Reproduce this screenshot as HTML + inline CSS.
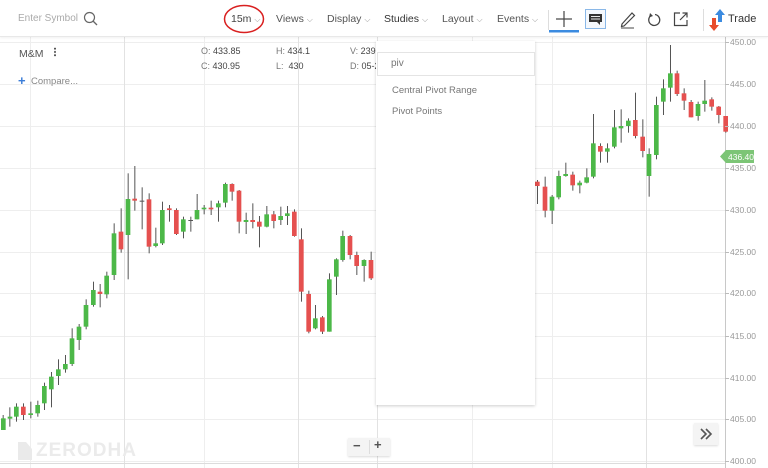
<!DOCTYPE html>
<html><head><meta charset="utf-8">
<style>
*{margin:0;padding:0;box-sizing:border-box}
body{width:768px;height:468px;overflow:hidden;background:#fff;font-family:"Liberation Sans",sans-serif;position:relative}
.t{position:absolute;white-space:nowrap}
</style></head><body>
<svg width="768" height="468" style="position:absolute;left:0;top:0">
<!-- grid -->
<g stroke="#eeeeee" stroke-width="1">
<line x1="0" y1="42.5" x2="725" y2="42.5"/><line x1="0" y1="84.5" x2="725" y2="84.5"/><line x1="0" y1="126.5" x2="725" y2="126.5"/><line x1="0" y1="168.5" x2="725" y2="168.5"/><line x1="0" y1="210.5" x2="725" y2="210.5"/><line x1="0" y1="252.5" x2="725" y2="252.5"/><line x1="0" y1="293.5" x2="725" y2="293.5"/><line x1="0" y1="336.5" x2="725" y2="336.5"/><line x1="0" y1="378.5" x2="725" y2="378.5"/><line x1="0" y1="419.5" x2="725" y2="419.5"/><line x1="0" y1="461.5" x2="725" y2="461.5"/>
<line x1="30.5" y1="36" x2="30.5" y2="468"/><line x1="204.5" y1="36" x2="204.5" y2="468"/><line x1="472.5" y1="36" x2="472.5" y2="468"/><line x1="552.5" y1="36" x2="552.5" y2="468"/>
</g>
<g stroke="#e2e2e2"><line x1="124.5" y1="36" x2="124.5" y2="468"/><line x1="298.5" y1="36" x2="298.5" y2="468"/><line x1="377.5" y1="36" x2="377.5" y2="468"/><line x1="646.5" y1="36" x2="646.5" y2="468"/></g>
<line x1="725.5" y1="36" x2="725.5" y2="468" stroke="#c8c8c8"/>
<line x1="0" y1="463.5" x2="725" y2="463.5" stroke="#dcdcdc"/>
<!-- candles left (zoom coords) -->
<g transform="translate(0,160) scale(0.33333)">
<g fill="#555">
<rect x="8" y="765" width="3" height="45"/><rect x="28" y="742" width="3" height="58"/><rect x="48" y="730" width="3" height="55"/><rect x="69" y="730" width="3" height="50"/><rect x="91" y="725" width="3" height="50"/><rect x="112" y="722" width="3" height="48"/><rect x="132" y="668" width="3" height="82"/><rect x="153" y="636" width="3" height="106"/><rect x="174" y="598" width="3" height="77"/><rect x="195" y="585" width="3" height="53"/><rect x="215" y="505" width="3" height="113"/><rect x="236" y="492" width="3" height="78"/><rect x="257" y="418" width="3" height="90"/><rect x="279" y="365" width="3" height="75"/><rect x="299" y="372" width="3" height="70"/><rect x="319" y="335" width="3" height="80"/><rect x="341" y="190" width="3" height="170"/><rect x="362" y="145" width="3" height="133"/><rect x="383" y="40" width="3" height="318"/><rect x="403" y="18" width="3" height="134"/><rect x="425" y="82" width="3" height="126"/><rect x="446" y="100" width="3" height="180"/><rect x="466" y="203" width="3" height="59"/><rect x="486" y="125" width="3" height="130"/><rect x="507" y="135" width="3" height="50"/><rect x="528" y="145" width="3" height="80"/><rect x="549" y="170" width="3" height="65"/><rect x="571" y="170" width="3" height="45"/><rect x="590" y="102" width="3" height="76"/><rect x="611" y="135" width="3" height="28"/><rect x="632" y="122" width="3" height="43"/><rect x="654" y="122" width="3" height="63"/><rect x="675" y="68" width="3" height="74"/><rect x="695" y="70" width="3" height="52"/><rect x="716" y="90" width="3" height="130"/><rect x="737" y="158" width="3" height="64"/><rect x="757" y="130" width="3" height="75"/><rect x="777" y="168" width="3" height="94"/><rect x="799" y="138" width="3" height="64"/><rect x="820" y="153" width="3" height="52"/><rect x="841" y="140" width="3" height="55"/><rect x="861" y="138" width="3" height="57"/><rect x="882" y="148" width="3" height="82"/><rect x="903" y="205" width="3" height="220"/><rect x="925" y="392" width="3" height="128"/><rect x="945" y="435" width="3" height="73"/><rect x="966" y="468" width="3" height="54"/><rect x="987" y="340" width="3" height="175"/><rect x="1008" y="295" width="3" height="110"/><rect x="1027" y="212" width="3" height="93"/><rect x="1049" y="225" width="3" height="73"/><rect x="1069" y="275" width="3" height="70"/><rect x="1091" y="298" width="3" height="67"/><rect x="1112" y="275" width="3" height="85"/>
</g>
<g fill="#4cb848">
<rect x="3" y="775" width="14" height="35"/><rect x="23" y="770" width="14" height="6"/><rect x="42" y="740" width="14" height="30"/><rect x="85" y="760" width="14" height="5"/><rect x="106" y="735" width="14" height="25"/><rect x="126" y="678" width="14" height="52"/><rect x="147" y="650" width="14" height="38"/><rect x="168" y="628" width="14" height="20"/><rect x="189" y="612" width="14" height="16"/><rect x="209" y="535" width="14" height="77"/><rect x="230" y="500" width="14" height="40"/><rect x="251" y="435" width="14" height="65"/><rect x="273" y="390" width="14" height="45"/><rect x="313" y="347" width="14" height="56"/><rect x="335" y="220" width="14" height="125"/><rect x="377" y="117" width="14" height="108"/><rect x="460" y="250" width="14" height="8"/><rect x="480" y="150" width="14" height="100"/><rect x="543" y="178" width="14" height="37"/><rect x="584" y="150" width="14" height="28"/><rect x="605" y="143" width="14" height="5"/><rect x="648" y="130" width="14" height="12"/><rect x="669" y="72" width="14" height="56"/><rect x="731" y="180" width="14" height="6"/><rect x="793" y="163" width="14" height="37"/><rect x="835" y="168" width="14" height="12"/><rect x="855" y="160" width="14" height="8"/><rect x="939" y="475" width="14" height="30"/><rect x="981" y="358" width="14" height="157"/><rect x="1002" y="298" width="14" height="52"/><rect x="1021" y="228" width="14" height="72"/><rect x="1085" y="300" width="14" height="18"/>
</g>
<g fill="#e5504f">
<rect x="63" y="740" width="14" height="25"/><rect x="293" y="395" width="14" height="7"/><rect x="356" y="215" width="14" height="53"/><rect x="397" y="116" width="14" height="6"/><rect x="440" y="118" width="14" height="142"/><rect x="501" y="145" width="14" height="5"/><rect x="522" y="150" width="14" height="72"/><rect x="626" y="143" width="14" height="5"/><rect x="689" y="72" width="14" height="23"/><rect x="710" y="92" width="14" height="93"/><rect x="751" y="180" width="14" height="6"/><rect x="771" y="185" width="14" height="15"/><rect x="814" y="163" width="14" height="20"/><rect x="876" y="155" width="14" height="73"/><rect x="897" y="238" width="14" height="157"/><rect x="919" y="402" width="14" height="113"/><rect x="960" y="472" width="14" height="43"/><rect x="1043" y="228" width="14" height="57"/><rect x="1063" y="285" width="14" height="33"/><rect x="1106" y="300" width="14" height="55"/>
</g>
<g fill="#555"><rect x="419" y="122" width="14" height="3"/><rect x="565" y="180" width="14" height="3"/></g>
</g>
<!-- candles right -->
<g transform="translate(530,40) scale(0.33333)">
<g fill="#555">
<rect x="21" y="420" width="3" height="72"/><rect x="44" y="410" width="3" height="122"/><rect x="65" y="465" width="3" height="87"/><rect x="85" y="392" width="3" height="86"/><rect x="106" y="368" width="3" height="42"/><rect x="127" y="395" width="3" height="57"/><rect x="148" y="422" width="3" height="38"/><rect x="169" y="385" width="3" height="45"/><rect x="189" y="222" width="3" height="193"/><rect x="210" y="310" width="3" height="58"/><rect x="231" y="310" width="3" height="58"/><rect x="252" y="210" width="3" height="115"/><rect x="272" y="208" width="3" height="100"/><rect x="294" y="235" width="3" height="43"/><rect x="315" y="158" width="3" height="137"/><rect x="337" y="238" width="3" height="114"/><rect x="356" y="325" width="3" height="145"/><rect x="378" y="170" width="3" height="188"/><rect x="399" y="118" width="3" height="107"/><rect x="420" y="15" width="3" height="170"/><rect x="440" y="92" width="3" height="76"/><rect x="461" y="145" width="3" height="65"/><rect x="482" y="180" width="3" height="52"/><rect x="503" y="185" width="3" height="57"/><rect x="523" y="120" width="3" height="95"/><rect x="544" y="172" width="3" height="40"/><rect x="565" y="198" width="3" height="52"/><rect x="586" y="228" width="3" height="50"/>
</g>
<g fill="#4cb848">
<rect x="59" y="470" width="14" height="42"/><rect x="79" y="408" width="14" height="64"/><rect x="100" y="402" width="14" height="6"/><rect x="142" y="428" width="14" height="8"/><rect x="163" y="412" width="14" height="16"/><rect x="183" y="310" width="14" height="100"/><rect x="225" y="325" width="14" height="10"/><rect x="246" y="262" width="14" height="58"/><rect x="266" y="258" width="14" height="7"/><rect x="288" y="242" width="14" height="16"/><rect x="350" y="342" width="14" height="66"/><rect x="372" y="195" width="14" height="150"/><rect x="393" y="145" width="14" height="40"/><rect x="414" y="100" width="14" height="43"/><rect x="497" y="192" width="14" height="36"/><rect x="517" y="182" width="14" height="10"/>
</g>
<g fill="#e5504f">
<rect x="15" y="425" width="14" height="13"/><rect x="38" y="440" width="14" height="72"/><rect x="121" y="404" width="14" height="32"/><rect x="204" y="318" width="14" height="17"/><rect x="309" y="240" width="14" height="48"/><rect x="331" y="290" width="14" height="43"/><rect x="434" y="100" width="14" height="62"/><rect x="455" y="160" width="14" height="22"/><rect x="476" y="186" width="14" height="46"/><rect x="538" y="178" width="14" height="22"/><rect x="559" y="200" width="14" height="25"/><rect x="580" y="228" width="14" height="47"/>
</g>
</g>
<!-- axis labels -->
<g font-family="Liberation Sans" font-size="8.5" fill="#999">
<g stroke="#bbb"><line x1="725" y1="42.5" x2="729" y2="42.5"/><line x1="725" y1="84.5" x2="729" y2="84.5"/><line x1="725" y1="126.5" x2="729" y2="126.5"/><line x1="725" y1="168.5" x2="729" y2="168.5"/><line x1="725" y1="210.5" x2="729" y2="210.5"/><line x1="725" y1="252.5" x2="729" y2="252.5"/><line x1="725" y1="293.5" x2="729" y2="293.5"/><line x1="725" y1="336.5" x2="729" y2="336.5"/><line x1="725" y1="378.5" x2="729" y2="378.5"/><line x1="725" y1="419.5" x2="729" y2="419.5"/><line x1="725" y1="461.5" x2="729" y2="461.5"/></g>
<text x="730" y="45">450.00</text><text x="730" y="87">445.00</text><text x="730" y="129">440.00</text><text x="730" y="171">435.00</text><text x="730" y="213">430.00</text><text x="730" y="255">425.00</text><text x="730" y="296">420.00</text><text x="730" y="339">415.00</text><text x="730" y="381">410.00</text><text x="730" y="422">405.00</text><text x="730" y="464">400.00</text>
</g>
<path d="M720 156.5 L726 150 L754 150 L754 163 L726 163 Z" fill="#7cc576"/>
<text x="728" y="160" font-family="Liberation Sans" font-size="8.5" fill="#fff">436.40</text>
</svg>

<!-- toolbar -->
<div style="position:absolute;left:0;top:0;width:768px;height:37px;background:#fff;border-bottom:1px solid #e8e8e8;box-shadow:0 1px 2px rgba(0,0,0,.06)"></div>
<div class="t" style="left:18px;top:13px;font-size:10px;color:#aaa">Enter Symbol</div>
<svg style="position:absolute;left:83px;top:11px" width="16" height="16"><circle cx="6.5" cy="6.5" r="5" fill="none" stroke="#666" stroke-width="1.2"/><line x1="10" y1="10" x2="14" y2="14" stroke="#666" stroke-width="1.3"/></svg>
<div class="t" style="left:231px;top:13px;font-size:10.5px;color:#444">15m <span style="color:#999;font-size:8px">⌵</span></div>
<svg style="position:absolute;left:222px;top:3px" width="44" height="32"><ellipse cx="22" cy="16" rx="19.5" ry="13.5" fill="none" stroke="#d92020" stroke-width="1.5"/></svg>
<div class="t" style="left:276px;top:13px;font-size:10.5px;color:#555">Views <span style="color:#999;font-size:8px">⌵</span></div>
<div class="t" style="left:327px;top:13px;font-size:10.5px;color:#555">Display <span style="color:#999;font-size:8px">⌵</span></div>
<div class="t" style="left:384px;top:13px;font-size:10.5px;color:#333">Studies <span style="color:#999;font-size:8px">⌵</span></div>
<div class="t" style="left:442px;top:13px;font-size:10.5px;color:#555">Layout <span style="color:#999;font-size:8px">⌵</span></div>
<div class="t" style="left:497px;top:13px;font-size:10.5px;color:#555">Events <span style="color:#999;font-size:8px">⌵</span></div>
<div style="position:absolute;left:548px;top:10px;width:1px;height:20px;background:#ddd"></div>
<svg style="position:absolute;left:549px;top:7px" width="32" height="28"><line x1="15" y1="4" x2="15" y2="20" stroke="#444" stroke-width="1.2"/><line x1="7" y1="12" x2="23" y2="12" stroke="#444" stroke-width="1.2"/><rect x="0" y="23" width="30" height="2.5" fill="#3b8be0"/></svg>
<div style="position:absolute;left:585px;top:9px;width:21px;height:20px;border:1px solid #8ab8e8;background:#f4f8fd"></div>
<svg style="position:absolute;left:588px;top:13px" width="16" height="13"><path d="M1 1h13v8h-2v3l-3-3H1z" fill="#333"/><g stroke="#fff" stroke-width="0.9"><line x1="3" y1="3.5" x2="12" y2="3.5"/><line x1="3" y1="6" x2="12" y2="6"/></g></svg>
<svg style="position:absolute;left:619px;top:9px" width="18" height="20"><path d="M3 15 L13 4 L15.5 6.5 L5 17 L2.5 17.5 Z" fill="none" stroke="#444" stroke-width="1.2"/><line x1="2" y1="19" x2="15" y2="19" stroke="#444" stroke-width="1"/></svg>
<svg style="position:absolute;left:647px;top:12px" width="16" height="16"><path d="M4 3.5 A5.5 5.5 0 1 0 8 2.5" fill="none" stroke="#444" stroke-width="1.3"/><path d="M3 1 L6 4 L2 5.5 Z" fill="#444"/></svg>
<svg style="position:absolute;left:673px;top:11px" width="16" height="16"><path d="M7 2H1.5v12.5H14V9" fill="none" stroke="#444" stroke-width="1.2"/><path d="M7 9 L14 2 M9.5 2H14v4.5" fill="none" stroke="#444" stroke-width="1.2"/></svg>
<div style="position:absolute;left:703px;top:9px;width:1px;height:22px;background:#ddd"></div>
<svg style="position:absolute;left:708px;top:8px" width="18" height="24"><path d="M12 1 L17 7 H14 V14 H10 V7 H7 Z" fill="#3b8be0"/><path d="M6 23 L1 17 H4 V10 H8 V17 H11 Z" fill="#e84c2c"/></svg>
<div class="t" style="left:728px;top:13px;font-size:11px;color:#333">Trade</div>

<!-- legend -->
<div class="t" style="left:19px;top:48px;font-size:10.5px;color:#555">M&amp;M</div>
<div style="position:absolute;left:54px;top:47px;width:2px;height:10px;background:radial-gradient(circle,#555 0.9px,transparent 1.1px) 0 0/2px 3.3px repeat-y"></div>
<div class="t" style="left:18px;top:73px;font-size:13px;color:#3b7dd8;font-weight:bold">+</div>
<div class="t" style="left:31px;top:76px;font-size:9.5px;color:#888">Compare...</div>
<div class="t" style="left:201px;top:46px;font-size:9px;color:#777">O: <span style="color:#444">433.85</span></div>
<div class="t" style="left:201px;top:61px;font-size:9px;color:#777">C: <span style="color:#444">430.95</span></div>
<div class="t" style="left:276px;top:46px;font-size:9px;color:#777">H: <span style="color:#444">434.1</span></div>
<div class="t" style="left:276px;top:61px;font-size:9px;color:#777">L: <span style="color:#444">&nbsp;430</span></div>
<div class="t" style="left:350px;top:46px;font-size:9px;color:#777">V: <span style="color:#444">2397</span></div>
<div class="t" style="left:350px;top:61px;font-size:9px;color:#777">D: <span style="color:#444">05-2</span></div>

<!-- dropdown -->
<div style="position:absolute;left:376px;top:41px;width:159px;height:364px;background:#fff;box-shadow:0 1px 3px rgba(0,0,0,.2)"></div>
<div style="position:absolute;left:377px;top:52px;width:158px;height:24px;border:1px solid #e4e4e4;background:#fff"></div>
<div class="t" style="left:391px;top:58px;font-size:10px;color:#777">piv</div>
<div class="t" style="left:392px;top:85px;font-size:9.5px;color:#777">Central Pivot Range</div>
<div class="t" style="left:392px;top:106px;font-size:9.5px;color:#777">Pivot Points</div>

<!-- watermark -->
<svg style="position:absolute;left:18px;top:442px" width="14" height="18"><path d="M0 0 L8 0 L14 7 L14 18 L0 18 Z" fill="#eaeaea"/></svg>
<div class="t" style="left:36px;top:440px;font-size:19px;font-weight:bold;color:#ebebeb;letter-spacing:1px">ZERODHA</div>

<!-- zoom buttons -->
<div style="position:absolute;left:348px;top:438px;width:42px;height:18px;background:#f4f4f4;box-shadow:0 1px 2px rgba(0,0,0,.15)"></div>
<div style="position:absolute;left:369px;top:440px;width:1px;height:14px;background:#ddd"></div>
<div class="t" style="left:353px;top:438px;font-size:13px;font-weight:bold;color:#555">−</div>
<div class="t" style="left:374px;top:437px;font-size:13px;font-weight:bold;color:#555">+</div>
<div style="position:absolute;left:694px;top:423px;width:24px;height:22px;background:#f4f4f4;box-shadow:0 1px 2px rgba(0,0,0,.15)"></div>
<svg style="position:absolute;left:698px;top:427px" width="16" height="14"><path d="M3 2 L8 7 L3 12 M8 2 L13 7 L8 12" fill="none" stroke="#555" stroke-width="1.6"/></svg>
</body></html>
